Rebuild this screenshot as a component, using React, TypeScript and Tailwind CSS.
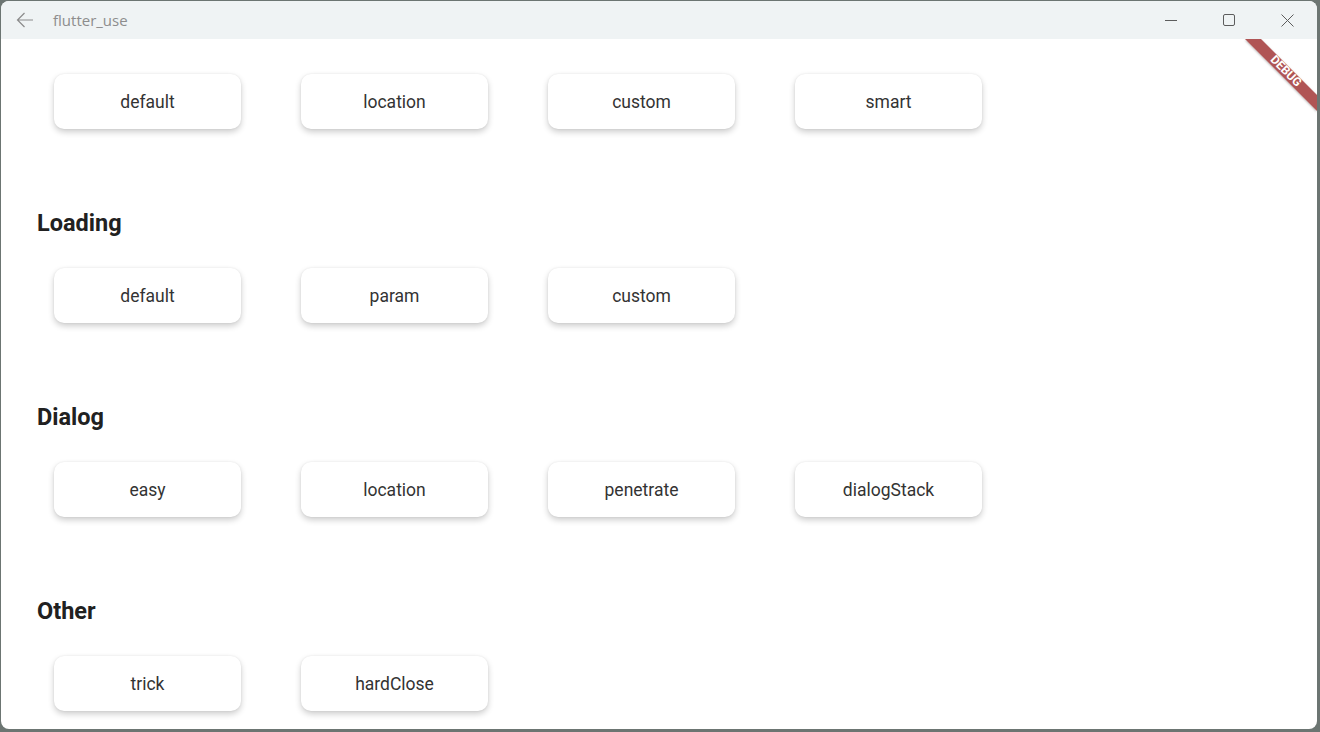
import React from 'react';

const sections: { title?: string; items: string[] }[] = [
  { items: ['default', 'location', 'custom', 'smart'] },
  { title: 'Loading', items: ['default', 'param', 'custom'] },
  { title: 'Dialog', items: ['easy', 'location', 'penetrate', 'dialogStack'] },
  { title: 'Other', items: ['trick', 'hardClose'] },
];

const TitleBar = () => (
  <div className="flex h-[38px] items-center bg-[#eff3f4] shrink-0">
    <svg width="18" height="16" viewBox="0 0 18 16" className="ml-[15px]">
      <path d="M17 8H1.5M8.5 1L1.5 8l7 7" fill="none" stroke="#8b8b8b" strokeWidth="1.2" />
    </svg>
    <span className="ml-[19px] text-[15px] text-[#8d8d8d]" style={{ fontFamily: '"Open Sans", "Noto Sans", sans-serif' }}>
      flutter_use
    </span>
    <div className="ml-auto flex h-full items-center">
      <div className="flex h-full w-[58px] items-center justify-center">
        <svg width="12" height="12" viewBox="0 0 12 12">
          <path d="M0 6.5h12" stroke="#5c5c5c" strokeWidth="1" />
        </svg>
      </div>
      <div className="flex h-full w-[58px] items-center justify-center">
        <svg width="12" height="12" viewBox="0 0 12 12">
          <rect x="0.5" y="0.5" width="11" height="11" rx="1.5" fill="none" stroke="#5c5c5c" strokeWidth="1" />
        </svg>
      </div>
      <div className="flex h-full w-[58px] items-center justify-center mr-[1px]">
        <svg width="13" height="13" viewBox="0 0 13 13">
          <path d="M0.5 0.5l12 12M12.5 0.5l-12 12" stroke="#5c5c5c" strokeWidth="1" />
        </svg>
      </div>
    </div>
  </div>
);

const DebugBanner = () => (
  <svg width="80" height="80" viewBox="0 0 80 80" className="absolute right-0 top-0 pointer-events-none">
    <defs>
      <filter id="bs" x="-20%" y="-20%" width="140%" height="140%">
        <feDropShadow dx="0" dy="1" stdDeviation="1.2" floodColor="#000" floodOpacity="0.3" />
      </filter>
    </defs>
    <polygon points="8,0 24,0 80,56 80,72" fill="#b05454" filter="url(#bs)" />
    <text
      x="0"
      y="0"
      transform="translate(49 32) rotate(45)"
      textAnchor="middle"
      dominantBaseline="central"
      fill="#ffffff"
      fontSize="12"
      fontWeight="bold"
      style={{ fontFamily: 'Roboto, "Liberation Sans", sans-serif' }}
    >
      DEBUG
    </text>
  </svg>
);

export default function App() {
  return (
    <div className="h-[732px] w-[1320px] overflow-hidden bg-[#6c7572]">
      <div
        className="relative ml-[1px] mt-[1px] flex h-[728px] w-[1316px] flex-col overflow-hidden rounded-lg bg-white"
        style={{ fontFamily: 'Roboto, "Liberation Sans", sans-serif' }}
      >
        <TitleBar />
        <div className="relative flex-1">
          <DebugBanner />
          <div className="flex flex-col pl-[36px] pt-[35px]">
            {sections.map((s, i) => (
              <div key={i} className={i === 0 ? '' : 'mt-[79px]'}>
                {s.title && (
                  <div className="mb-[32px] h-[28px] text-[23.5px] font-bold leading-[30px] text-[#212121]">{s.title}</div>
                )}
                <div className="flex gap-[60px] pl-[17px]">
                  {s.items.map((it) => (
                    <div
                      key={it}
                      className="flex h-[55px] w-[187px] items-center justify-center rounded-[10px] bg-white pt-[2px] text-[17.5px] text-[#333333] shadow-[0_3px_6px_rgba(0,0,0,0.2),0_0_2px_rgba(0,0,0,0.08)]"
                    >
                      {it}
                    </div>
                  ))}
                </div>
              </div>
            ))}
          </div>
        </div>
      </div>
    </div>
  );
}
